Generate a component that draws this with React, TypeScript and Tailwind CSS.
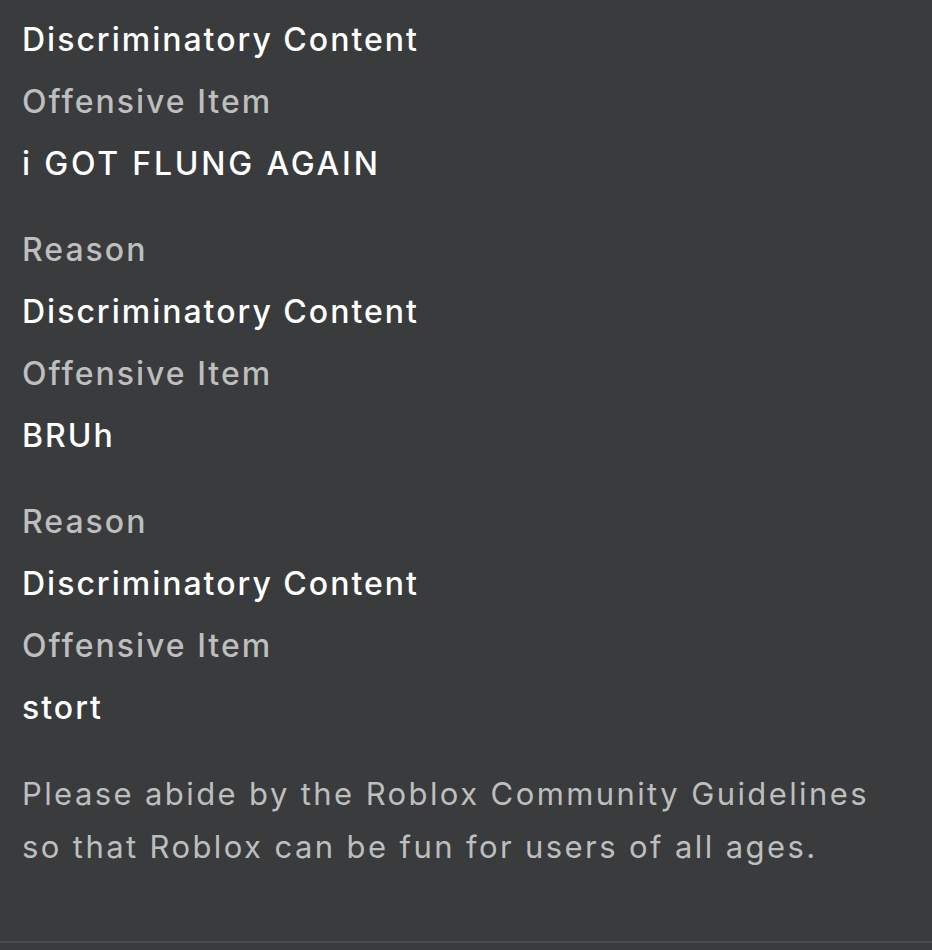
import React from 'react'

const items = [
  { text: 'i GOT FLUNG AGAIN' },
  { text: 'BRUh' },
  { text: 'stort' },
]

export default function App() {
  return (
    <div
      className="w-[932px] h-[950px] bg-[#393b3d] flex flex-col overflow-hidden"
      style={{ fontFamily: 'Inter, "Liberation Sans", sans-serif' }}
    >
      <div className="flex-1 pl-[22px] pt-[9px]">
        {items.map((item, i) => (
          <div key={i} className={`tracking-[2px] ${i > 0 ? 'mt-[24px]' : ''}`}>
            {i > 0 && (
              <div className="h-[62px] leading-[62px] text-[32px] font-medium text-[#bdbebe]">Reason</div>
            )}
            <div className="h-[62px] leading-[62px] text-[32px] font-medium text-white">Discriminatory Content</div>
            <div className="h-[62px] leading-[62px] text-[32px] font-medium text-[#bdbebe]">Offensive Item</div>
            <div className="h-[62px] leading-[62px] text-[32px] font-medium text-white">
              <span className={i === 0 ? 'tracking-[2.8px]' : ''}>{item.text}</span>
            </div>
          </div>
        ))}
        <p className="mt-[28px] w-[880px] text-[31px] leading-[53px] tracking-[2.4px] text-[#bdbebe]">
          Please abide by the Roblox Community Guidelines so that Roblox can be fun for users of all ages.
        </p>
      </div>
      <div className="h-[2px] bg-[#4b4d4f] mb-[7px]" />
    </div>
  )
}
